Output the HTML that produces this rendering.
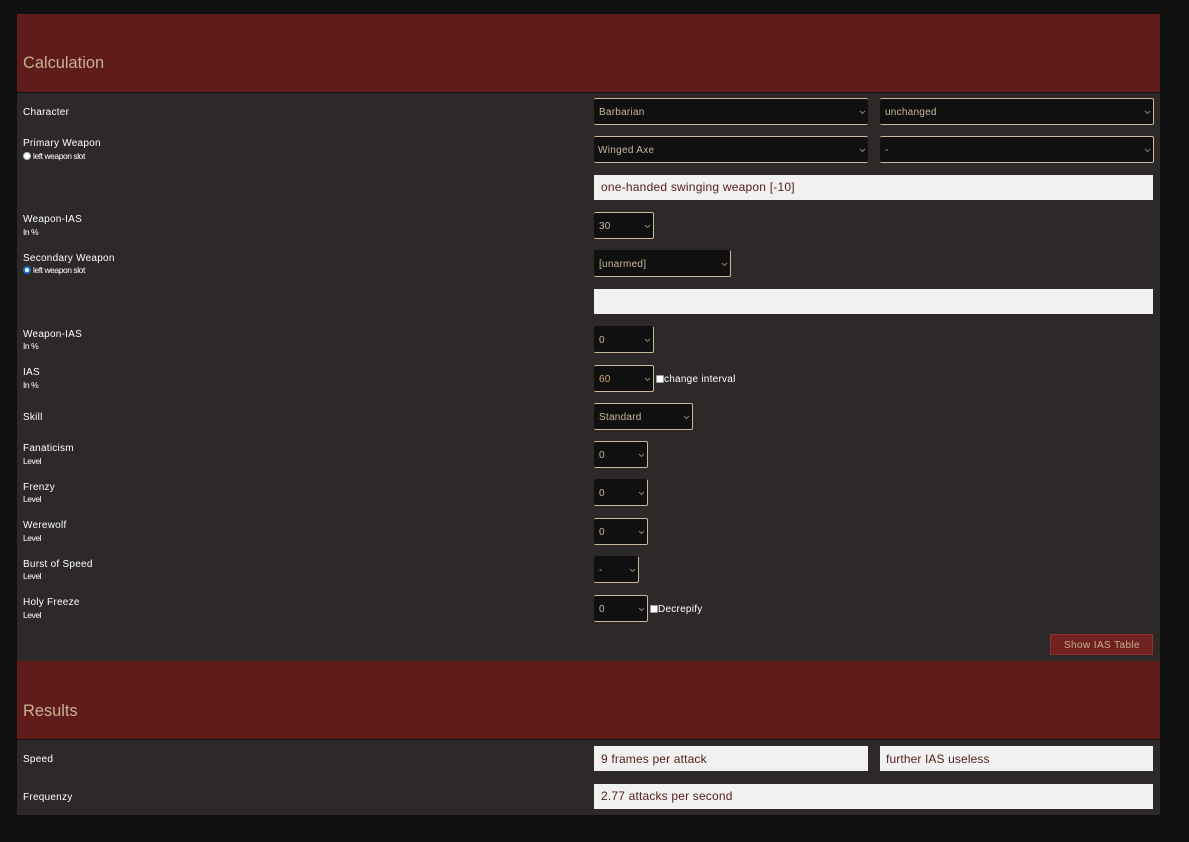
<!DOCTYPE html>
<html><head><meta charset="utf-8"><style>
html,body{margin:0;padding:0;width:1189px;height:842px;overflow:hidden;background:#111011;font-family:"Liberation Sans",sans-serif}
div,span,svg{position:absolute;box-sizing:border-box}
.bg{left:17px;top:14px;width:1143px;height:801px;background:#2c2928}
.hd{left:17px;width:1143px;height:79px;background:#601c1a;border-bottom:1px solid #111011}
.hd span{left:6px;font-size:16.4px;line-height:19px;color:#c9b092;white-space:nowrap}
.l{left:23px;margin-top:1px;font-size:10px;line-height:12px;color:#fff;white-space:nowrap;letter-spacing:.25px}
.s{font-size:8.5px;line-height:10px;color:#fff;white-space:nowrap;letter-spacing:-.45px}
.sel{height:27px;background:#111011;border-top:1px solid #c9b99a;border-bottom:1px solid #c9b99a;border-right:1px solid #c9b99a;border-radius:2px;border-left:0;color:#c9b99a;font-size:10px;line-height:27px;padding-left:5px;letter-spacing:.25px;white-space:nowrap}
.nr{border-right:0}
.nt{border-top-color:transparent}
.sel svg{right:2px;top:11px;width:7px;height:5px}
.box{left:594px;height:25px;background:#f1f1f1;color:#551b1a;font-size:12px;line-height:24px;padding-left:7px;white-space:nowrap;letter-spacing:.22px}
.cb{width:8px;height:8px;background:#fff;border:1px solid #9a9aa8;border-radius:1px}
.t{margin-top:1px;font-size:10px;line-height:12px;color:#fff;white-space:nowrap;letter-spacing:.25px}
</style></head><body>
<div class="bg"></div>
<div class="hd" style="top:14px"><span style="top:40px">Calculation</span></div>
<div class="hd" style="top:661px"><span style="top:41px">Results</span></div>

<div class="l" style="top:106px">Character</div>
<div class="l" style="top:137px">Primary Weapon</div>
<div style="left:23px;top:152px;width:8px;height:8px;border-radius:50%;background:#fff;border:1px solid #bbb"></div>
<div class="s" style="left:33px;top:151px">left weapon slot</div>
<div class="l" style="top:213px">Weapon-IAS</div>
<div class="s" style="left:23px;top:227px">In %</div>
<div class="l" style="top:252px">Secondary Weapon</div>
<div style="left:23px;top:266px;width:8px;height:8px;border-radius:50%;background:#fff;border:2px solid #1a6fd0"></div>
<div class="s" style="left:33px;top:265px">left weapon slot</div>
<div class="l" style="top:328px">Weapon-IAS</div>
<div class="s" style="left:23px;top:341px">In %</div>
<div class="l" style="top:366px">IAS</div>
<div class="s" style="left:23px;top:380px">In %</div>
<div class="l" style="top:411px">Skill</div>
<div class="l" style="top:442px">Fanaticism</div>
<div class="s" style="left:23px;top:456px">Level</div>
<div class="l" style="top:481px">Frenzy</div>
<div class="s" style="left:23px;top:494px">Level</div>
<div class="l" style="top:519px">Werewolf</div>
<div class="s" style="left:23px;top:533px">Level</div>
<div class="l" style="top:558px">Burst of Speed</div>
<div class="s" style="left:23px;top:571px">Level</div>
<div class="l" style="top:596px">Holy Freeze</div>
<div class="s" style="left:23px;top:610px">Level</div>
<div class="l" style="top:753px">Speed</div>
<div class="l" style="top:791px">Frequenzy</div>

<div class="sel nr" style="left:594px;top:98px;width:274px">Barbarian<svg viewBox="0 0 7 5"><path d="M1 1l2.5 2.5L6 1" fill="none" stroke="#8a8070"/></svg></div>
<div class="sel" style="left:880px;top:98px;width:274px">unchanged<svg viewBox="0 0 7 5"><path d="M1 1l2.5 2.5L6 1" fill="none" stroke="#8a8070"/></svg></div>
<div class="sel nr" style="left:594px;top:136px;width:274px;padding-left:4px;letter-spacing:.3px">Winged Axe<svg viewBox="0 0 7 5"><path d="M1 1l2.5 2.5L6 1" fill="none" stroke="#8a8070"/></svg></div>
<div class="sel" style="left:880px;top:136px;width:274px">-<svg viewBox="0 0 7 5"><path d="M1 1l2.5 2.5L6 1" fill="none" stroke="#8a8070"/></svg></div>
<div class="box" style="top:175px;width:559px">one-handed swinging weapon [-10]</div>
<div class="sel" style="left:594px;top:212px;width:60px">30<svg viewBox="0 0 7 5"><path d="M1 1l2.5 2.5L6 1" fill="none" stroke="#8a8070"/></svg></div>
<div class="sel nt" style="left:594px;top:250px;width:137px">[unarmed]<svg viewBox="0 0 7 5"><path d="M1 1l2.5 2.5L6 1" fill="none" stroke="#8a8070"/></svg></div>
<div class="box" style="top:289px;width:559px"></div>
<div class="sel nt" style="left:594px;top:326px;width:60px">0<svg viewBox="0 0 7 5"><path d="M1 1l2.5 2.5L6 1" fill="none" stroke="#8a8070"/></svg></div>
<div class="sel" style="left:594px;top:365px;width:60px;color:#d9a766">60<svg viewBox="0 0 7 5"><path d="M1 1l2.5 2.5L6 1" fill="none" stroke="#8a8070"/></svg></div>
<div class="cb" style="left:656px;top:375px"></div>
<div class="t" style="left:664px;top:373px">change interval</div>
<div class="sel" style="left:594px;top:403px;width:99px">Standard<svg viewBox="0 0 7 5"><path d="M1 1l2.5 2.5L6 1" fill="none" stroke="#8a8070"/></svg></div>
<div class="sel" style="left:594px;top:441px;width:54px">0<svg viewBox="0 0 7 5"><path d="M1 1l2.5 2.5L6 1" fill="none" stroke="#8a8070"/></svg></div>
<div class="sel nt" style="left:594px;top:479px;width:54px">0<svg viewBox="0 0 7 5"><path d="M1 1l2.5 2.5L6 1" fill="none" stroke="#8a8070"/></svg></div>
<div class="sel" style="left:594px;top:518px;width:54px">0<svg viewBox="0 0 7 5"><path d="M1 1l2.5 2.5L6 1" fill="none" stroke="#8a8070"/></svg></div>
<div class="sel nt" style="left:594px;top:556px;width:45px">-<svg viewBox="0 0 7 5"><path d="M1 1l2.5 2.5L6 1" fill="none" stroke="#8a8070"/></svg></div>
<div class="sel" style="left:594px;top:595px;width:54px">0<svg viewBox="0 0 7 5"><path d="M1 1l2.5 2.5L6 1" fill="none" stroke="#8a8070"/></svg></div>
<div class="cb" style="left:650px;top:605px"></div>
<div class="t" style="left:658px;top:603px">Decrepify</div>

<div style="left:1050px;top:634px;width:103px;height:21px;background:#702220;border:1px solid #93302c;color:#c9b092;font-size:10px;line-height:21px;text-align:center;letter-spacing:.4px;padding-left:1px;white-space:nowrap">Show IAS Table</div>

<div class="box" style="top:746px;width:274px;line-height:26px;letter-spacing:.16px">9 frames per attack</div>
<div class="box" style="left:880px;top:746px;width:273px;padding-left:6px;line-height:26px;letter-spacing:.12px">further IAS useless</div>
<div class="box" style="top:784px;width:559px;letter-spacing:.18px">2.77 attacks per second</div>
</body></html>
